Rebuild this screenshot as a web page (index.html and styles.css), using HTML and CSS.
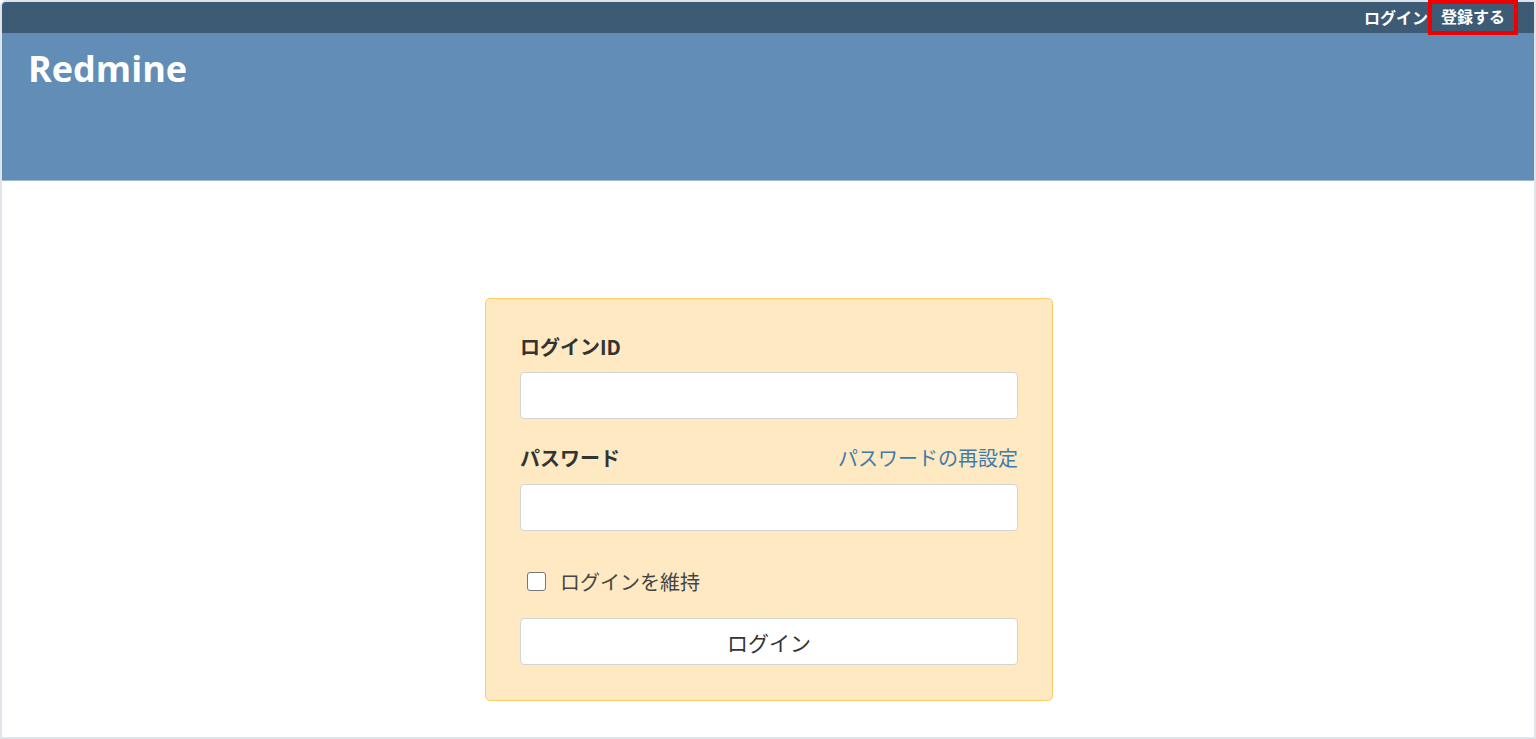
FILE: index.html
```html
<!DOCTYPE html>
<html lang="ja">
<head>
<meta charset="utf-8">
<title>Redmine</title>
<link rel="stylesheet" href="styles.css">
</head>
<body>
<div class="frame">
  <div class="top-menu">
    <a class="top-link" href="#">ログイン</a>
    <a class="top-link register" href="#">登録する</a>
  </div>
  <div class="header">
    <h1 class="logo">Redmine</h1>
  </div>
  <div class="content">
    <form class="login-box">
      <label class="field-label">ログインID</label>
      <input class="text-input" type="text">
      <div class="label-row">
        <label class="field-label">パスワード</label>
        <a class="lost-link" href="#">パスワードの再設定</a>
      </div>
      <input class="text-input pw" type="password">
      <label class="remember">
        <span class="check"></span>
        <span>ログインを維持</span>
      </label>
      <button class="login-btn" type="button">ログイン</button>
    </form>
  </div>
</div>
</body>
</html>
```

FILE: styles.css
```css
* { box-sizing: border-box; }
html, body { margin: 0; padding: 0; background: #fff; }
body {
  font-family: "Noto Sans CJK JP", "Open Sans", sans-serif;
  width: 1536px;
  height: 739px;
  overflow: hidden;
}
.frame {
  width: 1536px;
  height: 739px;
  border: 2px solid #dfe3ea;
  border-radius: 6px 0 0 0;
  display: flex;
  flex-direction: column;
  background: #fff;
}
.top-menu {
  height: 31px;
  background: #3e5b76;
  border-radius: 4px 0 0 0;
  display: flex;
  justify-content: flex-end;
  align-items: stretch;
  padding-right: 16px;
  position: relative;
  z-index: 1;
}
.top-link {
  color: #fff;
  text-decoration: none;
  font-weight: 700;
  font-size: 16px;
  line-height: 29px;
  display: flex;
  align-items: center;
}
.register {
  border: 4px solid #ee0000;
  padding: 0 9px 2px 9px;
  margin-top: -2px;
  margin-bottom: -2px;
}
.header {
  height: 148px;
  background: #628db6;
  border-bottom: 1px solid #9db8d3;
  padding: 15px 0 0 26px;
}
.logo {
  margin: 0;
  color: #fff;
  font-family: "Open Sans", sans-serif;
  font-weight: 700;
  font-size: 36px;
  line-height: 42px;
}
.content {
  flex: 1;
  display: flex;
  justify-content: center;
  align-items: flex-start;
  padding-top: 117px;
  padding-left: 2px;
}
.login-box {
  width: 568px;
  height: 403px;
  background: #fee9c2;
  border: 1px solid #f9cc66;
  border-radius: 5px;
  padding: 35px 34px 0 34px;
  display: flex;
  flex-direction: column;
}
.field-label {
  font-weight: 700;
  font-size: 20px;
  line-height: 26px;
  color: #333;
}
.text-input {
  margin-top: 12px;
  height: 47px;
  flex: none;
  width: 100%;
  background: #fff;
  border: 1px solid #d4d4d4;
  border-radius: 4px;
}
.label-row {
  margin-top: 26px;
  display: flex;
  justify-content: space-between;
  align-items: center;
}
.text-input.pw { margin-top: 13px; }
.lost-link {
  color: #3f7cab;
  text-decoration: none;
  font-size: 20px;
  line-height: 26px;
}
.remember {
  margin-top: 37px;
  height: 26px;
  display: flex;
  align-items: center;
  font-size: 20px;
  color: #444;
  padding-left: 7px;
}
.check {
  width: 19px;
  height: 19px;
  border: 1.5px solid #767676;
  border-radius: 3px;
  background: #fff;
  margin-right: 14px;
}
.login-btn {
  margin-top: 24px;
  height: 47px;
  flex: none;
  width: 100%;
  background: #fff;
  border: 1px solid #d4d4d4;
  border-radius: 4px;
  font-family: "Noto Sans CJK JP", sans-serif;
  font-size: 21px;
  color: #333;
}
```
